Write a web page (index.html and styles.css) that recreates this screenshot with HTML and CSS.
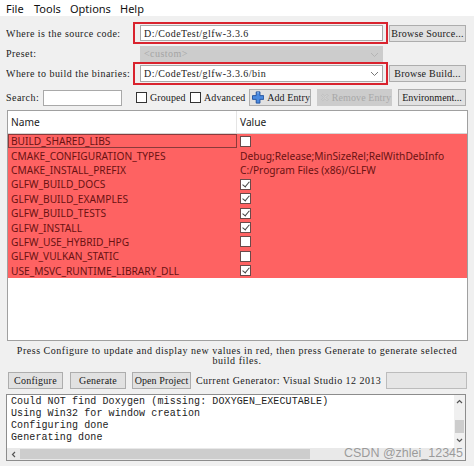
FILE: index.html
```html
<!DOCTYPE html>
<html>
<head>
<meta charset="utf-8">
<title>CMake</title>
<link rel="stylesheet" href="styles.css">
</head>
<body>
<div class="window">
  <div class="menubar">
    <span>File</span><span>Tools</span><span>Options</span><span>Help</span>
  </div>

  <div class="form">
    <div class="row r1">
      <div class="lbl">Where is the source code:</div>
      <div class="field input">D:/CodeTest/glfw-3.3.6</div>
      <div class="btn side">Browse Source...</div>
    </div>
    <div class="row r2">
      <div class="lbl">Preset:</div>
      <div class="field combo disabled"><span>&lt;custom&gt;</span>
        <svg class="chev" width="9" height="6" viewBox="0 0 9 6"><polyline points="1,1 4.5,4.5 8,1" fill="none" stroke="#b4b4b4" stroke-width="1"/></svg>
      </div>
    </div>
    <div class="row r3">
      <div class="lbl">Where to build the binaries:</div>
      <div class="field combo"><span>D:/CodeTest/glfw-3.3.6/bin</span>
        <svg class="chev" width="9" height="6" viewBox="0 0 9 6"><polyline points="1,1 4.5,4.5 8,1" fill="none" stroke="#777" stroke-width="1"/></svg>
      </div>
      <div class="btn side">Browse Build...</div>
    </div>
    <div class="row r4">
      <div class="lbl-s">Search:</div>
      <div class="search"></div>
      <div class="chk grp"><span class="box"></span>Grouped</div>
      <div class="chk adv"><span class="box"></span>Advanced</div>
      <div class="btn add">
        <svg width="13" height="13" viewBox="0 0 13 13"><path d="M4.5 0.5h4v4h4v4h-4v4h-4v-4h-4v-4h4z" fill="#4a8ae0" stroke="#1d4f9e" stroke-width="1"/><path d="M5.5 1.5h2" stroke="#9cc4f5" stroke-width="1"/></svg>
        Add Entry</div>
      <div class="btn remove">
        <svg width="11" height="11" viewBox="0 0 11 11"><path d="M1 2.5L2.5 1L5.5 4L8.5 1L10 2.5L7 5.5L10 8.5L8.5 10L5.5 7L2.5 10L1 8.5L4 5.5z" fill="#d6d6d6" stroke="#b0b0b0" stroke-width="0.8"/></svg>
        Remove Entry</div>
      <div class="btn env">Environment...</div>
    </div>
  </div>

  <div class="table">
    <div class="thead">
      <div class="c-name">Name</div>
      <div class="c-val">Value</div>
    </div>
    <div class="tbody">
      <div class="tr sel"><div class="c-name">BUILD_SHARED_LIBS</div><div class="c-val"><span class="cb"></span></div></div>
      <div class="tr"><div class="c-name">CMAKE_CONFIGURATION_TYPES</div><div class="c-val">Debug;Release;MinSizeRel;RelWithDebInfo</div></div>
      <div class="tr"><div class="c-name">CMAKE_INSTALL_PREFIX</div><div class="c-val">C:/Program Files (x86)/GLFW</div></div>
      <div class="tr"><div class="c-name">GLFW_BUILD_DOCS</div><div class="c-val"><span class="cb on"></span></div></div>
      <div class="tr"><div class="c-name">GLFW_BUILD_EXAMPLES</div><div class="c-val"><span class="cb on"></span></div></div>
      <div class="tr"><div class="c-name">GLFW_BUILD_TESTS</div><div class="c-val"><span class="cb on"></span></div></div>
      <div class="tr"><div class="c-name">GLFW_INSTALL</div><div class="c-val"><span class="cb on"></span></div></div>
      <div class="tr"><div class="c-name">GLFW_USE_HYBRID_HPG</div><div class="c-val"><span class="cb"></span></div></div>
      <div class="tr"><div class="c-name">GLFW_VULKAN_STATIC</div><div class="c-val"><span class="cb"></span></div></div>
      <div class="tr"><div class="c-name">USE_MSVC_RUNTIME_LIBRARY_DLL</div><div class="c-val"><span class="cb on"></span></div></div>
    </div>
  </div>

  <p class="hint">Press Configure to update and display new values in red, then press Generate to generate selected<br>build files.</p>

  <div class="actions">
    <div class="btn b-conf">Configure</div>
    <div class="btn b-gen">Generate</div>
    <div class="btn b-open">Open Project</div>
    <div class="gen">Current Generator: Visual Studio 12 2013</div>
    <div class="progress"></div>
  </div>

  <div class="log">
    <div class="log-text">Could NOT find Doxygen (missing: DOXYGEN_EXECUTABLE)<br>Using Win32 for window creation<br>Configuring done<br>Generating done</div>
    <div class="vscroll">
      <svg width="11" height="8" viewBox="0 0 11 8"><polyline points="3,5 5.5,2.5 8,5" fill="none" stroke="#555" stroke-width="1.2"/></svg>
      <div class="vthumb"></div>
      <svg class="down" width="11" height="8" viewBox="0 0 11 8"><polyline points="3,3 5.5,5.5 8,3" fill="none" stroke="#555" stroke-width="1.2"/></svg>
    </div>
    <div class="hscroll">
      <svg width="10" height="11" viewBox="0 0 10 11"><polyline points="6,3 3.5,5.5 6,8" fill="none" stroke="#555" stroke-width="1.2"/></svg>
      <div class="hthumb"></div>
    </div>
    <div class="corner"></div>
  </div>

  <div class="mark mark-src"></div>
  <div class="mark mark-bin"></div>
  <div class="watermark">CSDN @zhlei_12345</div>
</div>
</body>
</html>
```
FILE: styles.css
```css
* { box-sizing: border-box; margin: 0; padding: 0; }
html, body { width: 474px; height: 466px; overflow: hidden; }
body {
  background: #f0f0f0;
  font-family: "Liberation Serif", "Times New Roman", serif;
  font-size: 10px;
  letter-spacing: 0.45px;
  color: #1a1a1a;
}
.window { position: relative; width: 474px; height: 466px; }

.menubar {
  height: 16px;
  background: #fff;
  display: grid;
  grid-template-columns: 28px 36px 50px auto;
  align-items: center;
  padding-left: 6px;
  font-family: "Noto Sans", sans-serif;
  font-size: 11px;
  letter-spacing: 0;
  color: #111;
}

.form { padding: 0 8px 0 6px; }
.row { display: flex; align-items: center; }
.r1 { margin-top: 8px; height: 18px; }
.r2 { margin-top: 3px; height: 17px; }
.r3 { margin-top: 2px; height: 19px; }
.r4 { margin-top: 5px; height: 19px; }

.lbl { width: 134px; flex: none; white-space: nowrap; overflow: hidden; }
.field {
  width: 243px; flex: none; height: 16px;
  display: flex; align-items: center;
  padding-left: 3px;
  background: #fff;
  border: 1px solid #a9a9a9;
  white-space: nowrap;
}
.combo { position: relative; }
.combo .chev { position: absolute; right: 3px; top: 5px; }
.combo.disabled { background: #cccccc; border-color: #cccccc; color: #a4a4a4; }
.r3 .field { height: 17px; }

.btn {
  display: flex; align-items: center; justify-content: center;
  background: #e1e1e1;
  border: 1px solid #adadad;
  height: 17px;
  white-space: nowrap;
  flex: none;
  letter-spacing: 0.25px;
}
.side { margin-left: 6px; width: 77px; }

.lbl-s { width: 37px; flex: none; }
.search { width: 79px; height: 16px; background: #fff; border: 1px solid #a9a9a9; flex: none; }
.chk { display: flex; align-items: center; flex: none; letter-spacing: 0.1px; }
.chk .box { width: 11px; height: 11px; border: 1px solid #333; background: #fff; margin-right: 3px; flex: none; }
.grp { margin-left: 14px; width: 54px; }
.adv { width: 59px; }
.add { width: 62px; gap: 3px; justify-content: flex-start; padding-left: 2px; letter-spacing: 0.1px; }
.remove { margin-left: 6px; width: 75px; background: #cccccc; border-color: #cccccc; color: #a8a8a8; gap: 3px; justify-content: flex-start; padding-left: 3px; letter-spacing: 0.1px; }
.env { margin-left: 6px; width: 68px; letter-spacing: 0; }

.table {
  margin: 3px 6px 0 7px;
  height: 231px;
  background: #fff;
  border: 1px solid #a0a0a0;
  font-family: "Noto Sans", sans-serif;
  font-size: 10.2px;
  letter-spacing: 0;
}
.thead {
  height: 23px;
  display: flex; align-items: center;
  border-bottom: 1px solid #d5d5d5;
  color: #222;
}
.thead .c-name { border-right: 1px solid #e5e5e5; height: 100%; display: flex; align-items: center; }
.c-name { width: 229px; flex: none; padding-left: 3px; white-space: nowrap; }
.c-val { padding-left: 3px; white-space: nowrap; display: flex; align-items: center; }
.tbody { background: #fff; }
.tr {
  height: 14.4px;
  display: flex; align-items: center;
  background: #fe6262;
  color: #6a1212;
}
.tr .c-name, .tr .c-val { height: 100%; display: flex; align-items: center; }
.tr.sel .c-name { box-shadow: inset 0 0 0 1px #8a3a3a; }
.cb {
  width: 11px; height: 11px;
  background: #fff;
  border: 1px solid #6a4a4a;
  position: relative;
}
.cb.on::after {
  content: "";
  position: absolute;
  left: 3px; top: 0px;
  width: 3px; height: 6px;
  border: solid #444;
  border-width: 0 1.3px 1.3px 0;
  transform: rotate(40deg);
}

.hint { margin-top: 5px; line-height: 10px; text-align: center; letter-spacing: 0.52px; }

.actions { display: flex; align-items: center; margin-top: 6px; padding-left: 8px; height: 17px; }
.b-conf { width: 55px; }
.b-gen { width: 56px; margin-left: 7px; }
.b-open { width: 59px; margin-left: 6px; letter-spacing: 0.1px; }
.gen { margin-left: 5px; white-space: nowrap; width: 185px; flex: none; }
.progress { margin-left: 5px; width: 81px; height: 17px; background: #e6e6e6; border: 1px solid #bcbcbc; }

.log {
  margin: 5px 8px 0 6px;
  height: 67px;
  background: #fff;
  border: 1px solid #8c8c8c;
  display: grid;
  grid-template-columns: 1fr 11px;
  grid-template-rows: 1fr 12px;
}
.log-text {
  font-family: "Liberation Mono", "Courier New", monospace;
  font-size: 10px;
  letter-spacing: 0.1px;
  line-height: 12px;
  padding: 1px 0 0 4px;
  color: #222;
  white-space: nowrap;
  overflow: hidden;
}
.vscroll { background: #f0f0f0; display: flex; flex-direction: column; align-items: center; }
.vscroll svg { margin-top: 3px; }
.vthumb { width: 9px; height: 13px; background: #cdcdcd; margin-top: 14px; }
.vscroll .down { margin-top: 3px; }
.hscroll { background: #e9e9e9; display: flex; align-items: center; }
.hscroll svg { margin-left: 2px; flex: none; }
.hthumb { width: 290px; height: 10px; background: #cdcdcd; margin-left: 1px; }
.corner { background: #f0f0f0; }

.mark { position: absolute; border: 2px solid #d9232e; }
.mark-src { left: 133px; top: 22px; width: 255px; height: 22px; }
.mark-bin { left: 133px; top: 62px; width: 255px; height: 23px; }

.watermark {
  position: absolute;
  left: 344px; top: 447px;
  font-family: "Liberation Sans", Arial, sans-serif;
  font-size: 12.5px;
  line-height: 12px;
  letter-spacing: 0;
  color: rgba(140, 140, 140, 0.85);
}
```
